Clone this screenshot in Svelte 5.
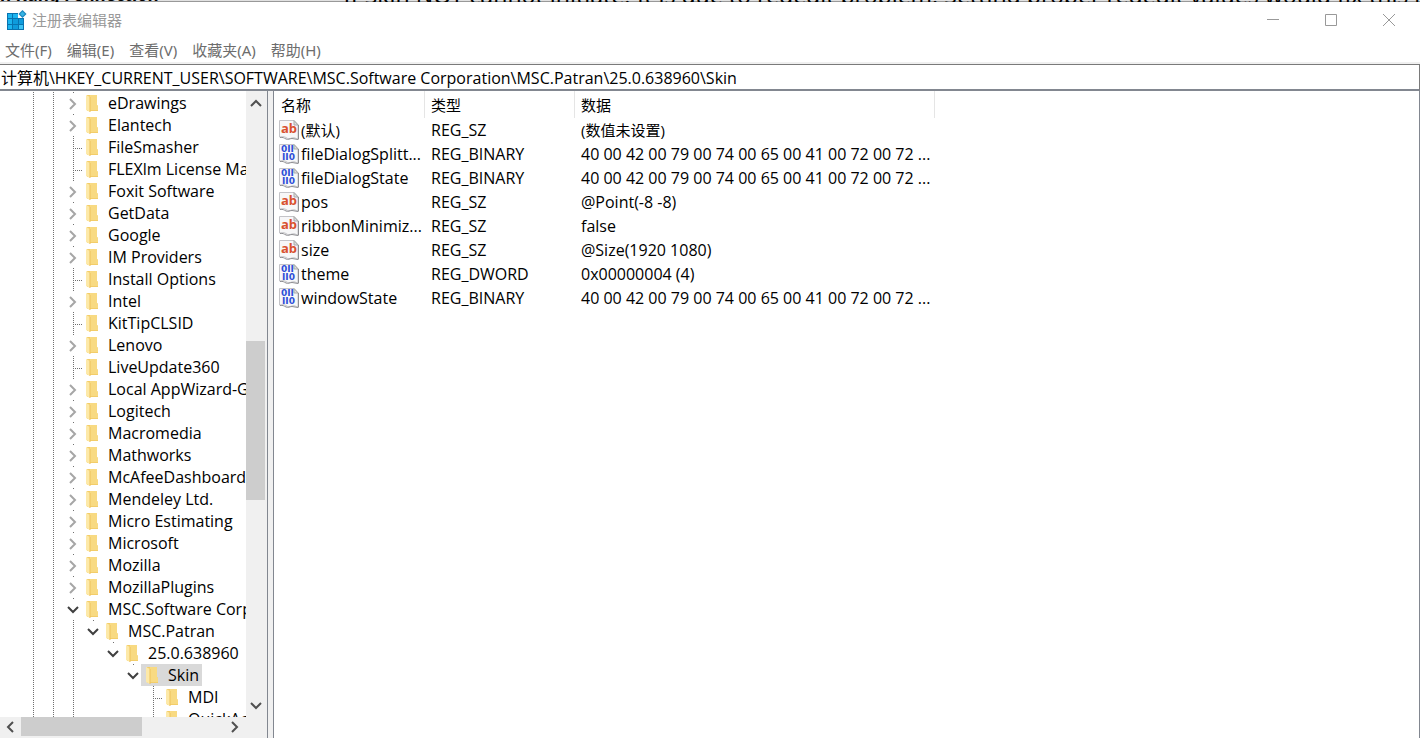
<script lang="ts">
  type State = "closed" | "open" | "leaf";
  type Node = { name: string; depth: number; state: State; selected?: boolean };

  const closed = (name: string): Node => ({ name, depth: 2, state: "closed" });
  const leaf = (name: string, depth = 2): Node => ({ name, depth, state: "leaf" });
  const open = (name: string, depth: number): Node => ({ name, depth, state: "open" });

  const nodes: Node[] = [
    closed("eDrawings"),
    closed("Elantech"),
    leaf("FileSmasher"),
    leaf("FLEXlm License Manager"),
    closed("Foxit Software"),
    closed("GetData"),
    closed("Google"),
    closed("IM Providers"),
    leaf("Install Options"),
    closed("Intel"),
    leaf("KitTipCLSID"),
    closed("Lenovo"),
    leaf("LiveUpdate360"),
    closed("Local AppWizard-Generated"),
    closed("Logitech"),
    closed("Macromedia"),
    closed("Mathworks"),
    closed("McAfeeDashboard"),
    closed("Mendeley Ltd."),
    closed("Micro Estimating"),
    closed("Microsoft"),
    closed("Mozilla"),
    closed("MozillaPlugins"),
    open("MSC.Software Corporation", 2),
    open("MSC.Patran", 3),
    open("25.0.638960", 4),
    { ...open("Skin", 5), selected: true },
    leaf("MDI", 6),
    leaf("QuickAccess", 6),
  ];

  // levels above "Skin" that still have siblings further down
  const lineDepths = [0, 1, 2];

  const bytes = "40 00 42 00 79 00 74 00 65 00 41 00 72 00 72 ...";

  const values = [
    { name: "(默认)", type: "REG_SZ", data: "(数值未设置)", unset: true },
    { name: "fileDialogSplitt...", type: "REG_BINARY", data: bytes },
    { name: "fileDialogState", type: "REG_BINARY", data: bytes },
    { name: "pos", type: "REG_SZ", data: "@Point(-8 -8)" },
    { name: "ribbonMinimiz...", type: "REG_SZ", data: "false" },
    { name: "size", type: "REG_SZ", data: "@Size(1920 1080)" },
    { name: "theme", type: "REG_DWORD", data: "0x00000004 (4)" },
    { name: "windowState", type: "REG_BINARY", data: bytes },
  ];

  const menus = ["文件(F)", "编辑(E)", "查看(V)", "收藏夹(A)", "帮助(H)"];

  const vertical = { start: 39, size: 27.5 };
  const horizontal = { start: 0, size: 60 };

  let path = $state(
    "计算机\\HKEY_CURRENT_USER\\SOFTWARE\\MSC.Software Corporation\\MSC.Patran\\25.0.638960\\Skin",
  );
</script>

{#snippet chevron(d: string)}
  <svg width="14" height="14" viewBox="0 0 14 14" aria-hidden="true">
    <path {d} fill="none" stroke="currentColor" stroke-width="2" />
  </svg>
{/snippet}

<div class="app">
  <div class="behind" aria-hidden="true">
    <b>n Kung Fennection</b>
    <span>If Skin NOT cannot initiate. It is due to regedit problem. Setting proper regedit values would fix this i</span>
  </div>

  <header>
    <svg width="20" height="20" viewBox="0 0 20 20" aria-hidden="true">
      <path d="M0 3h11v5h6v12H0z" fill="#0873b0" />
      <path d="M1 4h4v4H1zM6 4h5v4H6zM1 9h4v5H1zM1 15h4v4H1z" fill="#1cb4ee" />
      <path d="M6 9h5v5H6zM12 9h4v5h-4zM6 15h5v4H6z" fill="#0e9bdc" />
      <path d="M12 15h4v4h-4z" fill="#3cc4f5" />
      <path d="M15.500 0l4 4-4 4-4-4z" fill="#1683bb" />
      <path d="M15.500 1.500l2.500 2.500-2.500 2.500L13 4z" fill="#36b3e4" />
    </svg>
    <h1>注册表编辑器</h1>
    <div class="controls">
      <button aria-label="最小化">
        <svg width="14" height="14" viewBox="0 0 14 14"><path d="M1 6.500h12" /></svg>
      </button>
      <button aria-label="最大化">
        <svg width="14" height="14" viewBox="0 0 14 14"><path d="M1.500 1.500h11v11h-11z" /></svg>
      </button>
      <button aria-label="关闭">
        <svg width="14" height="14" viewBox="0 0 14 14"><path d="M1 1l12 12M13 1L1 13" /></svg>
      </button>
    </div>
  </header>

  <nav>
    {#each menus as menu}
      <button>{menu}</button>
    {/each}
  </nav>

  <input class="path" type="text" aria-label="路径" spellcheck="false" bind:value={path} />

  <main>
    <section class="side">
      <div class="upper">
        <ul>
          {#each nodes as node}
            <li>
              {#each { length: node.depth } as _, depth}
                <span class="cell" class:line={lineDepths.includes(depth)}></span>
              {/each}
              {#if node.state === "leaf"}
                <span class="cell line branch"></span>
              {:else}
                <button class="cell toggle {node.state}" aria-label="展开 {node.name}">
                  {@render chevron(node.state === "open" ? "M2 5l5 5 5-5" : "M4 3l5 5-5 5")}
                </button>
              {/if}
              <button class="key" class:selected={node.selected}>
                <svg width="13" height="17" viewBox="0 0 13 17" aria-hidden="true">
                  <path d="M1 0h10v10l1 1v5H1z" fill="#f3cd69" />
                  <path d="M4 0h7v10l1 1v4H4z" fill="#f8da82" />
                  <path d="M0 0l4 2v15l-4-2z" fill="#fde9a8" />
                  <path d="M4 2v15" stroke="#eec25a" stroke-width="1" />
                </svg>
                {node.name}
              </button>
            </li>
          {/each}
        </ul>
        <div class="scroll vertical">
          <button aria-label="向上">{@render chevron("M2 9l5-5 5 5")}</button>
          <div class="track">
            <div class="thumb" style="top: {vertical.start}%; height: {vertical.size}%"></div>
          </div>
          <button aria-label="向下">{@render chevron("M2 4l5 5 5-5")}</button>
        </div>
      </div>
      <div class="scroll horizontal">
        <button aria-label="向左">{@render chevron("M9 2L4 7l5 5")}</button>
        <div class="track">
          <div class="thumb" style="left: {horizontal.start}%; width: {horizontal.size}%"></div>
        </div>
        <button aria-label="向右">{@render chevron("M5 2l5 5-5 5")}</button>
      </div>
    </section>

    <section class="values">
      <table>
        <thead>
          <tr>
            <th class="name">名称</th>
            <th class="type">类型</th>
            <th class="data">数据</th>
            <th></th>
          </tr>
        </thead>
        <tbody>
          {#each values as value}
            <tr>
              <td class:unset={value.unset}>
                <div class="value">
                  <svg width="20" height="20" viewBox="0 0 20 20" aria-hidden="true">
                    <path
                      d="M.5.500H15l4 4V19c-2 0-3-2-6-1s-4 1-6-.5-4-.5-6.500-.5z"
                      fill="#f7f7f8"
                      stroke="#c4c4c8"
                    />
                    <path d="M19.500 5v14.500" fill="none" stroke="#8e8e92" />
                    <path d="M15 .5V5h4z" fill="#ddd" stroke="#aaa" />
                    <path d="M1 17.500c3-.5 4 .5 6 1.500s4-.5 6-.5 4 1 6 1" fill="none" stroke="#8e8e92" />
                    {#if value.type === "REG_SZ"}
                      <text class="ab" x="2" y="13">ab</text>
                    {:else}
                      <text class="bits"><tspan x="2" y="8">0II</tspan><tspan x="3" y="16">II0</tspan></text>
                    {/if}
                  </svg>
                  {value.name}
                </div>
              </td>
              <td>{value.type}</td>
              <td class:unset={value.unset}>{value.data}</td>
              <td></td>
            </tr>
          {/each}
        </tbody>
      </table>
    </section>
  </main>
</div>

<style>
  :global(body) {
    margin: 0;
  }

  .app {
    display: flex;
    flex-direction: column;
    height: 100vh;
    overflow: hidden;
    background: #fff;
    color: #000;
    font: 16px/22px "Open Sans", "Noto Sans CJK SC", sans-serif;
  }

  button {
    margin: 0;
    padding: 0;
    border: 0;
    background: none;
    color: inherit;
    font: inherit;
  }

  svg {
    display: block;
    flex: none;
  }

  /* sliver of the document behind the window */
  .behind {
    display: flex;
    align-items: flex-end;
    flex: none;
    height: 2px;
    overflow: hidden;
    background: linear-gradient(#e1e1e1 1px, #999 1px);
    font-family: "Noto Sans", sans-serif;
    font-size: 23px;
    line-height: 14px;
    white-space: nowrap;
  }

  .behind b {
    flex: none;
    width: 343px;
    font-size: 17px;
  }

  header {
    display: flex;
    align-items: center;
    flex: none;
    height: 36px;
    padding: 0 2px 0 7px;
    gap: 5px;
    color: #999;
  }

  h1 {
    flex: 1;
    margin: 0;
    font-size: 15px;
    font-weight: 400;
  }

  .controls {
    display: flex;
  }

  .controls button {
    display: grid;
    place-items: center;
    width: 58px;
    height: 36px;
  }

  .controls path {
    fill: none;
    stroke: #999;
  }

  nav {
    display: flex;
    align-items: center;
    flex: none;
    height: 24px;
    padding: 0 5px;
    gap: 15px;
    border-bottom: 2px solid #f0f0f0;
    color: #6d6d6d;
    font-family: "Noto Sans", "Noto Sans CJK SC", sans-serif;
    font-size: 15px;
  }

  .path {
    box-sizing: border-box;
    flex: none;
    width: 100%;
    height: 27px;
    padding: 0 1px 1px;
    border: 1px solid #7a7a7a;
    border-left: 0;
    border-bottom: 2px solid #828790;
    border-radius: 0;
    outline: 0;
    background: #fff;
    color: #000;
    font: inherit;
  }

  main {
    display: flex;
    flex: 1;
    min-height: 0;
    background: #f0f0f0;
  }

  .side {
    display: flex;
    flex-direction: column;
    flex: none;
    width: 267px;
    border-right: 1px solid #828790;
  }

  .upper {
    display: flex;
    flex: 1;
    min-height: 0;
  }

  ul {
    flex: 1;
    min-width: 0;
    margin: 0;
    padding: 1px 0 0 23px;
    overflow: hidden;
    background: #fff;
    list-style: none;
  }

  li {
    display: flex;
    height: 22px;
  }

  .cell {
    flex: none;
    width: 20px;
    height: 22px;
  }

  .line {
    background: repeating-linear-gradient(#707070 0 1px, transparent 1px 2px) 10px 0 / 1px 100% no-repeat;
  }

  .branch {
    background:
      repeating-linear-gradient(#707070 0 1px, transparent 1px 2px) 10px 0 / 1px 100% no-repeat,
      repeating-linear-gradient(90deg, #707070 0 1px, transparent 1px 2px) 10px 12px / 9px 1px no-repeat;
  }

  .toggle {
    display: grid;
    place-items: center;
    background: linear-gradient(#707070, #707070) 10px 0 / 1px 1px no-repeat;
    color: #a6a6a6;
  }

  .toggle.open {
    color: #404040;
  }

  .key {
    display: flex;
    align-items: center;
    gap: 9px;
    height: 22px;
    margin-left: -2px;
    padding: 0 3px 0 5px;
    white-space: nowrap;
  }

  .selected {
    background: #d9d9d9;
  }

  .scroll {
    display: flex;
    flex: none;
    color: #505050;
  }

  .scroll button {
    display: grid;
    place-items: center;
    flex: none;
    width: 21px;
    height: 20px;
  }

  .vertical {
    flex-direction: column;
    width: 19px;
    padding: 1px 2px 0 0;
  }

  .vertical button {
    width: 19px;
    height: 23px;
  }

  .horizontal {
    height: 21px;
    padding-right: 23px;
  }

  .track {
    position: relative;
    flex: 1;
  }

  .thumb {
    position: absolute;
    background: #cdcdcd;
  }

  .vertical .thumb {
    width: 100%;
  }

  .horizontal .thumb {
    height: 19px;
  }

  .values {
    flex: 1;
    min-width: 0;
    margin-left: 5px;
    border-left: 1px solid #828790;
    border-right: 1px solid #828790;
    background: #fff;
  }

  table {
    width: 100%;
    border-collapse: separate;
    border-spacing: 0;
    table-layout: fixed;
  }

  th,
  td {
    box-sizing: border-box;
    height: 24px;
    padding: 0 0 0 7px;
    overflow: hidden;
    text-align: left;
    white-space: nowrap;
  }

  th {
    height: 27px;
    font-size: 15px;
    font-weight: 400;
  }

  th + th {
    padding-left: 6px;
    border-left: 1px solid #e5e5e5;
  }

  .name,
  .type {
    width: 150px;
  }

  .data {
    width: 360px;
  }

  td:first-child {
    padding-left: 5px;
  }

  .unset {
    font-size: 15px;
  }

  .value {
    display: flex;
    align-items: center;
    gap: 2px;
  }

  .ab {
    fill: #d9502e;
    font: 700 13px "Open Sans", sans-serif;
  }

  .bits {
    fill: #2f4fd8;
    font: 700 9px "DejaVu Sans", sans-serif;
  }
</style>
